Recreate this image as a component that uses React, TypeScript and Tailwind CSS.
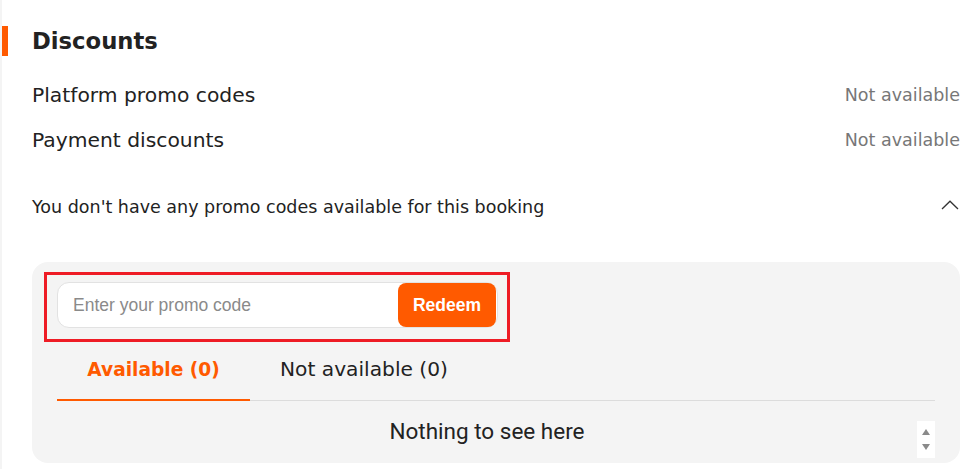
const ChevronUp = () => (
  <svg width="18" height="10" viewBox="0 0 18 10" fill="none">
    <path d="M1 9L9 1.2L17 9" stroke="#333" strokeWidth="1.3" />
  </svg>
);

const FakeScrollbar = () => (
  <div className="mt-[20px] flex h-[37px] w-[18px] flex-col items-center justify-between bg-white py-[8px]">
    <svg width="8" height="6" viewBox="0 0 8 6">
      <path d="M4 0L8 6H0Z" fill="#8a8a8a" />
    </svg>
    <svg width="8" height="6" viewBox="0 0 8 6">
      <path d="M0 0H8L4 6Z" fill="#8a8a8a" />
    </svg>
  </div>
);

export default function App() {
  return (
    <div className="flex h-[469px] w-[980px] overflow-hidden bg-white font-['DejaVu_Sans',sans-serif] text-[#222]">
      <div className="w-[2px] shrink-0 bg-[#f4f4f4]" />
      <div className="flex flex-1 flex-col pr-[20px] pt-[26px]">
        {/* heading */}
        <div className="flex h-[30px] items-center gap-[24px]">
          <div className="h-[30px] w-[6px] bg-[#ff5a00]" />
          <h2 className="text-[22.7px] font-semibold leading-none">Discounts</h2>
        </div>

        <div className="mt-[17px] pl-[30px]">
          <div className="flex h-[45px] items-center justify-between">
            <span className="text-[20.3px]">Platform promo codes</span>
            <span className="text-[17.5px] text-[#777]">Not available</span>
          </div>
          <div className="flex h-[45px] items-center justify-between">
            <span className="text-[20.3px]">Payment discounts</span>
            <span className="text-[17.5px] text-[#777]">Not available</span>
          </div>

          <div className="mt-[14px] flex h-[60px] items-center justify-between">
            <span className="text-[17.5px]">You don't have any promo codes available for this booking</span>
            <div className="mr-[1px] mt-[-4px]">
              <ChevronUp />
            </div>
          </div>

          {/* promo box */}
          <div className="mt-[25px] h-[201px] rounded-[16px] bg-[#f4f4f4] pl-[12px] pr-[25px] pt-[10px]">
            <div className="h-[70px] w-[466px] border-[3px] border-[#ee1c25] pl-[10px] pt-[7px]">
              <div className="flex h-[46px] w-[441px] items-center justify-between rounded-[12px] border border-[#e2e2e2] bg-white pl-[15px] pr-[1px]">
                <input
                  placeholder="Enter your promo code"
                  className="w-[300px] bg-transparent font-['Liberation_Sans',Arial,sans-serif] text-[17.5px] outline-none placeholder:text-[#8a8a8a]"
                />
                <button className="h-[44px] w-[98px] rounded-[8px] bg-[#ff5a00] font-['Liberation_Sans',Arial,sans-serif] text-[17.5px] font-bold text-white">
                  Redeem
                </button>
              </div>
            </div>

            <div className="ml-[13px] flex border-b border-[#dcdcdc]">
              <button className="-mb-px flex h-[59px] w-[193px] items-center justify-center border-b-2 border-[#ff5a00] pb-[2px] text-[18.6px] font-semibold text-[#ff5a00]">
                Available (0)
              </button>
              <button className="-mb-px flex h-[59px] items-center border-b-2 border-transparent px-[30px] pb-[2px] text-[20.2px]">
                Not available (0)
              </button>
            </div>

            <div className="ml-[13px] flex h-[63px]">
              <div className="flex flex-1 items-center justify-center pb-[2px] font-['Roboto',sans-serif] text-[22.5px]">
                Nothing to see here
              </div>
              <FakeScrollbar />
            </div>
          </div>
        </div>
      </div>
    </div>
  );
}
